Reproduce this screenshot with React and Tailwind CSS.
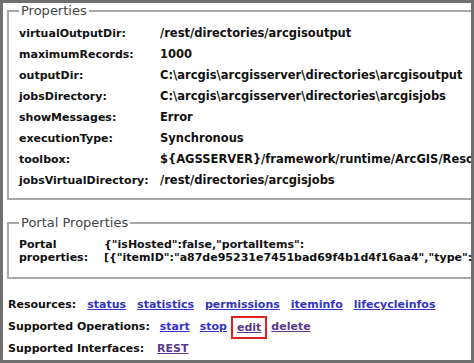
import React from 'react';

const props = [
  ['virtualOutputDir:', '/rest/directories/arcgisoutput'],
  ['maximumRecords:', '1000'],
  ['outputDir:', 'C:\\arcgis\\arcgisserver\\directories\\arcgisoutput'],
  ['jobsDirectory:', 'C:\\arcgis\\arcgisserver\\directories\\arcgisjobs'],
  ['showMessages:', 'Error'],
  ['executionType:', 'Synchronous'],
  ['toolbox:', '${AGSSERVER}/framework/runtime/ArcGIS/Resources/Toolboxes'],
  ['jobsVirtualDirectory:', '/rest/directories/arcgisjobs'],
];

const Link = ({ children, visited }) => (
  <a href="#" className={`underline font-bold ${visited ? 'text-[#5b3a8e]' : 'text-[#3434c0]'}`}>
    {children}
  </a>
);

const App = () => {
  return (
    <div
      className="w-[474px] h-[363px] overflow-hidden bg-white border-[3px] border-[#707070] text-[11px] text-[#111]"
      style={{ fontFamily: '"DejaVu Sans", Verdana, sans-serif' }}
    >
      <div className="w-[560px] pl-[4px]">
        {/* Properties */}
        <fieldset className="border-2 border-[#a8a8a8] pl-[10px] pt-[5px] pb-[7px]">
          <legend className="px-[2px] text-[13px] text-[#444] font-normal leading-[15px]">Properties</legend>
          <div className="grid grid-cols-[141px_1fr] font-bold">
            {props.map(([k, v]) => (
              <React.Fragment key={k}>
                <div className="h-[21px] leading-[21px] whitespace-nowrap">{k}</div>
                <div className="h-[21px] leading-[21px] whitespace-nowrap text-[11.5px]">{v}</div>
              </React.Fragment>
            ))}
          </div>
        </fieldset>

        {/* Portal Properties */}
        <fieldset className="mt-[15px] border-2 border-[#a8a8a8] pl-[10px] pt-[8px] pb-[13px]">
          <legend className="px-[2px] text-[13px] text-[#444] font-normal leading-[15px]">Portal Properties</legend>
          <div className="grid grid-cols-[85px_1fr] font-bold leading-[13px]">
            <div>
              Portal
              <br />
              properties:
            </div>
            <div className="whitespace-nowrap">
              {'{"isHosted":false,"portalItems":'}
              <br />
              {'[{"itemID":"a87de95231e7451bad69f4b1d4f16aa4","type":"GPServer"}]}'}
            </div>
          </div>
        </fieldset>
      </div>

      {/* Links */}
      <div className="pl-[5px] pt-[15px] font-bold">
        <div className="h-[22px] leading-[22px] flex gap-[11px]">
          <span>Resources:</span>
          <Link>status</Link>
          <Link>statistics</Link>
          <Link>permissions</Link>
          <Link>iteminfo</Link>
          <Link>lifecycleinfos</Link>
        </div>
        <div className="h-[22px] leading-[22px] flex items-center gap-[10px]">
          <span>Supported Operations:</span>
          <Link>start</Link>
          <Link>stop</Link>
          <span className="border-2 border-[#e02020] h-[23px] leading-[19px] px-[4px] -mx-[6px]">
            <Link visited>edit</Link>
          </span>
          <Link visited>delete</Link>
        </div>
        <div className="h-[22px] leading-[22px] flex gap-[10px]">
          <span className="mr-[3px]">Supported Interfaces:</span>
          <Link visited>REST</Link>
        </div>
      </div>
    </div>
  );
};

export default App;
